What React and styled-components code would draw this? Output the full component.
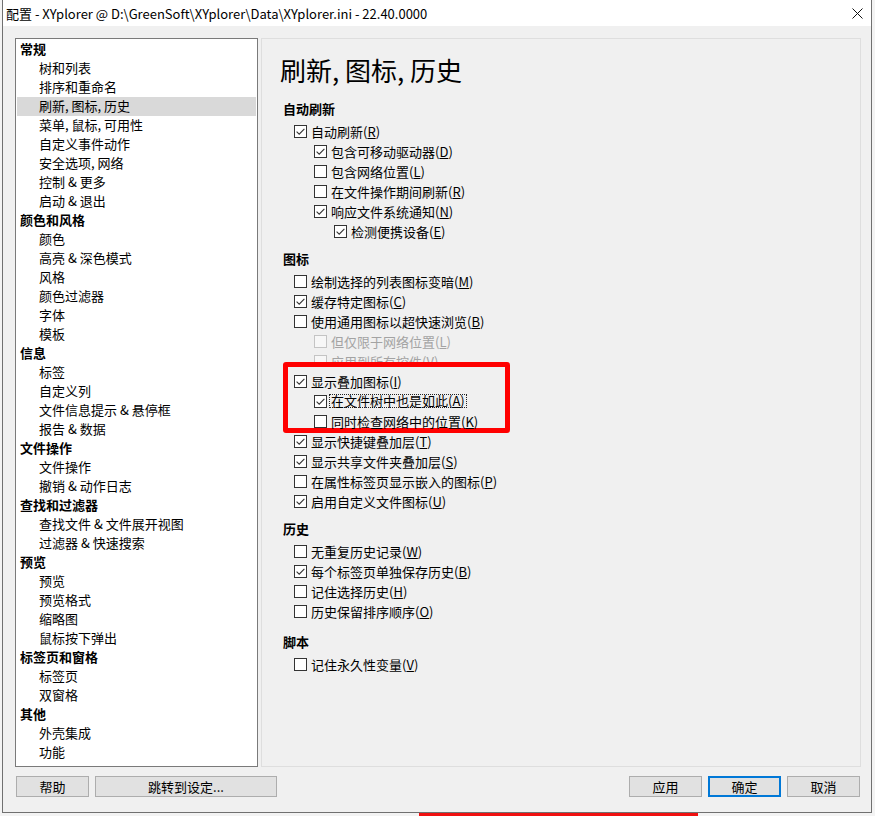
import React from 'react'
import styled, { createGlobalStyle } from 'styled-components'

const GlobalStyle = createGlobalStyle`
  html, body {
    margin: 0;
    padding: 0;
    background: #e6e6e6;
  }
  body {
    font-family: "Noto Sans CJK SC", "Noto Sans", sans-serif;
    font-size: 13px;
    color: #000;
  }
`

const Page = styled.div`
  width: 875px;
  height: 816px;
  overflow: hidden;
  padding-left: 2px;
  box-sizing: border-box;
  background: #f3f3f3;
`

const Window = styled.div`
  width: 870px;
  height: 813px;
  box-sizing: border-box;
  border: 1px solid #707070;
  border-top: none;
  background: #f0f0f0;
  display: flex;
  flex-direction: column;
`

const TitleBar = styled.div`
  height: 26px;
  flex: none;
  background: #fff;
  display: flex;
  align-items: center;
  justify-content: space-between;
  padding: 0 8px 0 3px;
`

const TitleText = styled.div`
  font-size: 13px;
  white-space: nowrap;
`

const Body = styled.div`
  flex: 1;
  display: flex;
  flex-direction: column;
  padding: 12px 9px 15px 12px;
`

const Panels = styled.div`
  display: flex;
  gap: 3px;
  height: 729px;
`

const Tree = styled.div`
  width: 243px;
  height: 100%;
  box-sizing: border-box;
  border: 1px solid #7a7a7a;
  background: #fff;
  padding: 1px;
`

const TreeItem = styled.div`
  height: 19px;
  line-height: 17px;
  padding-bottom: 2px;
  box-sizing: border-box;
  padding-left: ${p => (p.$head ? 3 : 22)}px;
  font-weight: ${p => (p.$head ? 700 : 400)};
  background: ${p => (p.$selected ? '#d9d9d9' : 'transparent')};
  white-space: nowrap;
`

const Content = styled.div`
  width: 600px;
  height: 100%;
  box-sizing: border-box;
  border: 1px solid #dedede;
  padding: 13px 0 0 18px;
`

const PageTitle = styled.div`
  font-size: 26px;
  line-height: 36px;
  margin-bottom: 11px;
`

const Section = styled.div`
  margin-top: ${p => p.$gap || 0}px;
`

const Heading = styled.div`
  line-height: 20px;
  font-weight: 700;
  padding-left: 3px;
  margin-bottom: 2px;
`

const Row = styled.div`
  height: 20px;
  display: flex;
  align-items: center;
  gap: 4px;
  padding-left: ${p => 14 + (p.$level - 1) * 20}px;
  color: ${p => (p.$disabled ? '#a3a3a3' : '#000')};
  white-space: nowrap;
`

const Box = styled.span`
  width: 13px;
  height: 13px;
  flex: none;
  box-sizing: border-box;
  border: 1px solid ${p => (p.$disabled ? '#c4c4c4' : '#333')};
  background: ${p => (p.$disabled ? '#f7f7f7' : '#fff')};
  display: flex;
  align-items: center;
  justify-content: center;
`

const Focus = styled.span`
  display: inline-block;
  line-height: 12px;
  border: 1px dotted #222;
  padding: 0 1px;
  margin-left: -2px;
`

const Highlight = styled.div`
  position: relative;
  z-index: 1;
  width: 227px;
  height: 71px;
  box-sizing: border-box;
  margin: -9px 0 -2px 3px;
  padding-top: 4px;
  border: 5px solid #ff0000;
  border-radius: 3px;
  background: #f0f0f0;
`

const HighlightRows = styled.div`
  margin-left: -8px;
`

const ButtonBar = styled.div`
  display: flex;
  margin-top: 9px;
  padding-right: 2px;
  gap: 6px;
`

const Button = styled.div`
  width: ${p => p.$w || 73}px;
  height: 21px;
  box-sizing: border-box;
  border: ${p => (p.$default ? '2px solid #0078d7' : '1px solid #adadad')};
  background: #e1e1e1;
  display: flex;
  align-items: center;
  justify-content: center;
  margin-left: ${p => p.$ml || 0}px;
`

const Spacer = styled.div`
  flex: 1;
`

const RedStrip = styled.div`
  width: 279px;
  height: 3px;
  margin-left: 417px;
  background: #f01010;
`

const tree = [
  ['常规', 1], ['树和列表'], ['排序和重命名'], ['刷新, 图标, 历史', 0, 1], ['菜单, 鼠标, 可用性'],
  ['自定义事件动作'], ['安全选项, 网络'], ['控制 & 更多'], ['启动 & 退出'],
  ['颜色和风格', 1], ['颜色'], ['高亮 & 深色模式'], ['风格'], ['颜色过滤器'], ['字体'], ['模板'],
  ['信息', 1], ['标签'], ['自定义列'], ['文件信息提示 & 悬停框'], ['报告 & 数据'],
  ['文件操作', 1], ['文件操作'], ['撤销 & 动作日志'],
  ['查找和过滤器', 1], ['查找文件 & 文件展开视图'], ['过滤器 & 快速搜索'],
  ['预览', 1], ['预览'], ['预览格式'], ['缩略图'], ['鼠标按下弹出'],
  ['标签页和窗格', 1], ['标签页'], ['双窗格'],
  ['其他', 1], ['外壳集成'], ['功能'],
]

function Check({ checked, disabled }) {
  return (
    <Box $disabled={disabled}>
      {checked && (
        <svg width="11" height="11" viewBox="0 0 11 11">
          <path d="M1.6 5.6 L4.2 8.2 L9.4 2.8" fill="none" stroke="#333" strokeWidth="1.1" />
        </svg>
      )}
    </Box>
  )
}

function Option({ label, k, level = 1, checked, disabled, focus }) {
  const text = (
    <>
      {label}(<u>{k}</u>)
    </>
  )
  return (
    <Row $level={level} $disabled={disabled}>
      <Check checked={checked} disabled={disabled} />
      {focus ? <Focus>{text}</Focus> : <span>{text}</span>}
    </Row>
  )
}

export default function App() {
  return (
    <Page>
      <GlobalStyle />
      <Window>
        <TitleBar>
          <TitleText>配置 - XYplorer @ D:\GreenSoft\XYplorer\Data\XYplorer.ini - 22.40.0000</TitleText>
          <svg width="11" height="11" viewBox="0 0 11 11">
            <path d="M0.5 0.5 L10.5 10.5 M10.5 0.5 L0.5 10.5" stroke="#111" strokeWidth="1" />
          </svg>
        </TitleBar>
        <Body>
          <Panels>
            <Tree>
              {tree.map(([t, head, sel], i) => (
                <TreeItem key={i} $head={head} $selected={sel}>{t}</TreeItem>
              ))}
            </Tree>
            <Content>
              <PageTitle>刷新, 图标, 历史</PageTitle>

              <Section>
                <Heading>自动刷新</Heading>
                <Option label="自动刷新" k="R" checked />
                <Option label="包含可移动驱动器" k="D" level={2} checked />
                <Option label="包含网络位置" k="L" level={2} />
                <Option label="在文件操作期间刷新" k="R" level={2} />
                <Option label="响应文件系统通知" k="N" level={2} checked />
                <Option label="检测便携设备" k="E" level={3} checked />
              </Section>

              <Section $gap={8}>
                <Heading>图标</Heading>
                <Option label="绘制选择的列表图标变暗" k="M" />
                <Option label="缓存特定图标" k="C" checked />
                <Option label="使用通用图标以超快速浏览" k="B" />
                <Option label="但仅限于网络位置" k="L" level={2} disabled />
                <Option label="应用到所有控件" k="V" level={2} disabled />
                <Highlight>
                  <HighlightRows>
                    <Option label="显示叠加图标" k="I" checked />
                    <Option label="在文件树中也是如此" k="A" level={2} checked focus />
                    <Option label="同时检查网络中的位置" k="K" level={2} />
                  </HighlightRows>
                </Highlight>
                <Option label="显示快捷键叠加层" k="T" checked />
                <Option label="显示共享文件夹叠加层" k="S" checked />
                <Option label="在属性标签页显示嵌入的图标" k="P" />
                <Option label="启用自定义文件图标" k="U" checked />
              </Section>

              <Section $gap={8}>
                <Heading>历史</Heading>
                <Option label="无重复历史记录" k="W" />
                <Option label="每个标签页单独保存历史" k="B" checked />
                <Option label="记住选择历史" k="H" />
                <Option label="历史保留排序顺序" k="O" />
              </Section>

              <Section $gap={11}>
                <Heading>脚本</Heading>
                <Option label="记住永久性变量" k="V" />
              </Section>
            </Content>
          </Panels>
          <ButtonBar>
            <Button $ml={1}>帮助</Button>
            <Button $w={182}>跳转到设定...</Button>
            <Spacer />
            <Button>应用</Button>
            <Button $default>确定</Button>
            <Button>取消</Button>
          </ButtonBar>
        </Body>
      </Window>
      <RedStrip />
    </Page>
  )
}
